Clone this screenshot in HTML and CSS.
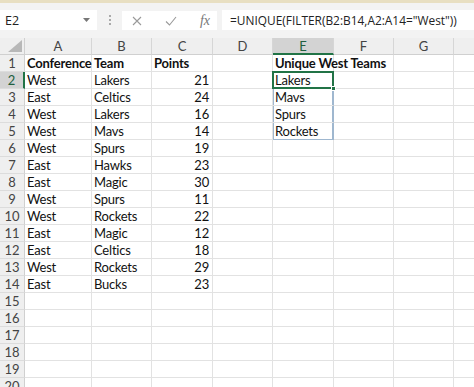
FILE: index.html
```html
<!DOCTYPE html>
<html>
<head>
<meta charset="utf-8">
<link rel="stylesheet" href="styles.css">
</head>
<body>
<div class="app">
  <div class="topband"></div>
  <div class="fbar">
    <div class="namebox"><span>E2</span><svg class="dd" width="7" height="4" viewBox="0 0 7 4"><path d="M0 0H7L3.5 4Z" fill="#777"/></svg></div>
    <div class="dots"><i></i><i></i><i></i></div>
    <div class="fnbox">
      <svg width="10" height="10" viewBox="0 0 10 10"><path d="M1 1L9 9M9 1L1 9" stroke="#9a9a9a" stroke-width="1.1" fill="none"/></svg>
      <svg width="12" height="10" viewBox="0 0 12 10"><path d="M1 5.5L4.5 9L11 1" stroke="#9a9a9a" stroke-width="1.1" fill="none"/></svg>
      <span class="fx">fx</span>
    </div>
    <div class="formula">=UNIQUE(FILTER(B2:B14,A2:A14="West"))</div>
  </div>
  <div class="grid" id="grid">
    <div class="corner"><svg width="14" height="12" viewBox="0 0 14 12"><path d="M14 0V12H0Z" fill="#b8b8b8"/></svg></div>
    <div class="ch">A</div><div class="ch">B</div><div class="ch">C</div><div class="ch">D</div><div class="ch sel">E</div><div class="ch">F</div><div class="ch">G</div><div class="ch last"></div>
  </div>
</div>
<script src="app.js"></script>
</body>
</html>
```
FILE: app.js
```js
const data = [
  ["Conference","Team","Points","","Unique West Teams"],
  ["West","Lakers",21,"","Lakers"],
  ["East","Celtics",24,"","Mavs"],
  ["West","Lakers",16,"","Spurs"],
  ["West","Mavs",14,"","Rockets"],
  ["West","Spurs",19],
  ["East","Hawks",23],
  ["East","Magic",30],
  ["West","Spurs",11],
  ["West","Rockets",22],
  ["East","Magic",12],
  ["East","Celtics",18],
  ["West","Rockets",29],
  ["East","Bucks",23]
];
const g = document.getElementById('grid');
let html = '';
for (let r = 1; r <= 20; r++) {
  const row = data[r-1] || [];
  html += '<div class="rh' + (r===2?' sel':'') + '">' + r + '</div>';
  for (let c = 0; c < 8; c++) {
    let v = row[c];
    if (v === undefined) v = '';
    let cls = 'cell';
    if (typeof v === 'number') cls += ' num';
    if (r === 1) cls += ' bold';
    if (c === 7) cls += ' last';
    if (c === 4 && r >= 2 && r <= 5) cls += ' spill';
    if (c === 4 && r === 2) cls += ' top';
    if (c === 4 && r === 5) cls += ' bot';
    html += '<div class="' + cls + '">' + v + (c===4&&r===2?'<b class="handle"></b>':'') + '</div>';
  }
}
g.insertAdjacentHTML('beforeend', html);
```
FILE: styles.css
```css
html, body { margin: 0; padding: 0; }
body { width: 474px; height: 387px; overflow: hidden; background: #fff; font-family: Lato, "Liberation Sans", sans-serif; }
.app { width: 474px; }
.topband { height: 3px; background: #e8dfc2; }
.fbar { height: 35px; background: #f3f3f3; display: flex; align-items: flex-start; padding-top: 7px; box-sizing: border-box; }
.namebox { width: 97px; height: 20px; background: #fff; display: flex; align-items: center; justify-content: space-between; padding: 0 7px 0 5px; box-sizing: border-box; font-family: "Open Sans", sans-serif; font-size: 12.5px; color: #222; }
.dots { width: 25px; height: 20px; display: flex; flex-direction: column; align-items: center; justify-content: center; gap: 2px; }
.dots i { width: 2px; height: 2px; background: #aaa; display: block; }
.fnbox { width: 95px; height: 19px; margin-top: 1px; background: #fff; display: flex; align-items: center; justify-content: space-between; padding: 0 7px 0 10px; box-sizing: border-box; }
.fx { font-family: "Liberation Serif", serif; font-style: italic; font-size: 14px; color: #777; }
.formula { margin-left: 5px; flex: 1; height: 20px; background: #fff; font-family: "Open Sans", sans-serif; font-size: 11.9px; line-height: 20px; padding-left: 8px; color: #222; white-space: nowrap; overflow: hidden; }
.grid { display: grid; grid-template-columns: 25px 67px 60px 61px 60px 61px 60px 60px 20px; grid-auto-rows: 17px; }
.corner { background: #efefef; border-right: 1px solid #d0d0d0; border-bottom: 1px solid #d0d0d0; box-sizing: border-box; display: flex; align-items: flex-end; justify-content: flex-end; padding: 0 2px 2px 0; }
.ch { background: #efefef; border-right: 1px solid #d6d6d6; border-bottom: 1px solid #d0d0d0; box-sizing: border-box; text-align: center; font-size: 13px; line-height: 16px; color: #444; }
.ch.sel { background: #d3d3d3; border-bottom: 2px solid #217346; color: #216040; }
.ch.last, .cell.last { border-right: none; }
.rh { background: #efefef; border-right: 1px solid #d0d0d0; border-bottom: 1px solid #dcdcdc; box-sizing: border-box; text-align: center; font-size: 13px; line-height: 16px; color: #444; }
.rh.sel { background: #d3d3d3; border-right: 2px solid #217346; color: #216040; }
.cell { position: relative; border-right: 1px solid #e2e2e2; border-bottom: 1px solid #e2e2e2; box-sizing: border-box; font-size: 13px; letter-spacing: -0.2px; line-height: 16px; color: #111; padding: 0 3px 0 2px; white-space: nowrap; }
.cell.num { text-align: right; }
.cell.bold { font-weight: bold; overflow: visible; }
.cell.spill { box-shadow: inset 1px 0 0 #9fb7cf, inset -1px 0 0 #9fb7cf; border-right-color: #9fb7cf; }
.cell.bot { border-bottom-color: #9fb7cf; }
.cell.top { box-shadow: inset 0 0 0 2px #217346; margin-top: -1px; margin-left: -1px; border: none; width: 62px; height: 18px; padding: 1px 0 0 3px; z-index: 2; }
.handle { position: absolute; right: -2px; bottom: -2px; width: 5px; height: 5px; background: #217346; border: 1px solid #fff; box-sizing: border-box; }
```
